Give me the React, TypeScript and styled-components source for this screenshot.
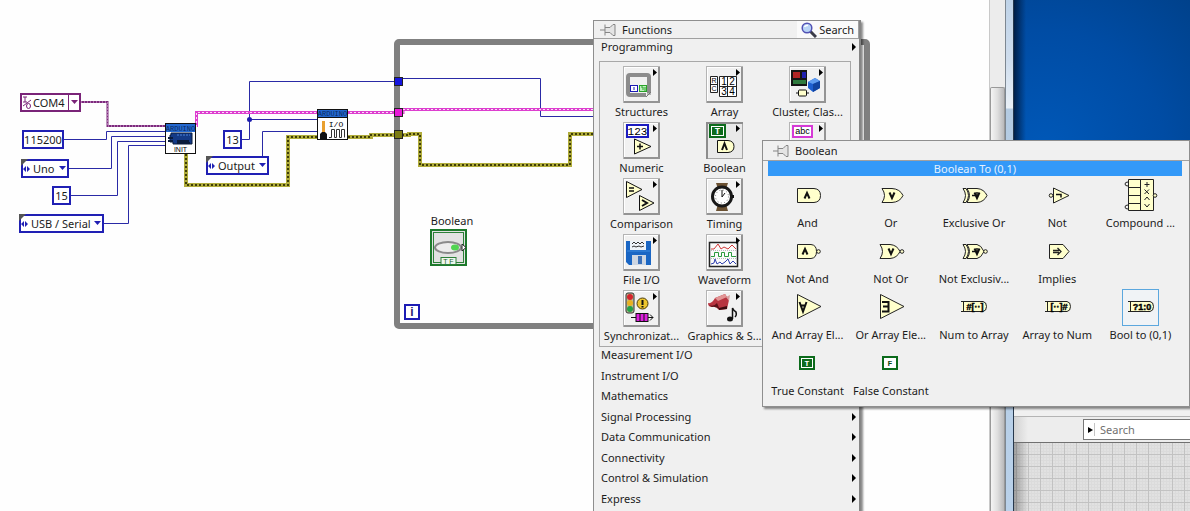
import React from "react";
import styled, { createGlobalStyle, css } from "styled-components";

const GlobalStyle = createGlobalStyle`
  * { box-sizing: border-box; }
  body {
    margin: 0;
    background: #fff;
    overflow: hidden;
    color: #1c1c1c;
    font-family: "Noto Sans", "Open Sans", sans-serif;
    font-size: 11px;
    line-height: 16px;
  }
  button, input, select { font: inherit; color: inherit; }
`;

/* ---------- page frame ---------- */

const Page = styled.div`
  position: relative;
  display: flex;
  min-height: 100vh;
  overflow: hidden;
`;

const Diagram = styled.main`
  position: relative;
  flex: 1;
  min-width: 0;
  background: #fefefe;
`;

const ScrollTrack = styled.div`
  display: flex;
  flex-direction: column;
  width: 16px;
  padding-top: 87px;
  border-left: 1px solid #c9c9c9;
  background: #ececec;
`;

const ScrollThumb = styled.div`
  flex: 1;
  border: 1px solid #999;
  border-bottom: 0;
  border-radius: 2px 2px 0 0;
  background: linear-gradient(90deg, #f4f4f4, #dedede 50%, #b9b9bb);
`;

const WindowEdge = styled.div`
  width: 9px;
  border-left: 1px solid #7d8791;
  border-right: 1px solid #27384c;
  background: linear-gradient(180deg, #bfd3e8 0, #cfdded 60px, #e9f0f7 108px, #b4cbe2 109px, #b9d1ea 100%);
`;

const Side = styled.aside`
  display: flex;
  flex-direction: column;
  width: 176px;
`;

const Desktop = styled.div`
  height: 400px;
  background:
    linear-gradient(90deg, rgba(0, 15, 40, 0.75), transparent 12px),
    radial-gradient(circle at 30px 150px, #0058b8, #004ca4 120px, #004088 220px);
`;

const PanelWindow = styled.section`
  display: flex;
  flex: 1;
  flex-direction: column;
  padding-top: 16px;
  background: #f0f0f0;
`;

const PanelToolbar = styled.div`
  display: flex;
  justify-content: flex-end;
  padding: 2px 0;
  border-top: 1px solid #b4b4b4;
  border-bottom: 1px solid #707070;
  background: linear-gradient(90deg, #d2d2d2, #ededed 14px);
`;

const SearchField = styled.label`
  display: flex;
  align-items: center;
  width: 107px;
  height: 21px;
  padding-left: 4px;
  border: 1px solid #777;
  border-right: 0;
  background: #fff;
`;

const SearchInput = styled.input`
  flex: 1;
  min-width: 0;
  margin-left: 1px;
  padding: 0 0 0 5px;
  border: 0;
  border-left: 1px solid #c4c4c4;
  height: 13px;
  outline: 0;
  background: transparent;
  &::placeholder { color: #707070; opacity: 1; }
`;

const PanelGrid = styled.div`
  flex: 1;
  background:
    linear-gradient(90deg, rgba(60, 60, 60, 0.4), transparent 14px),
    repeating-linear-gradient(90deg, transparent 0 2px, #c2c2c2 2px 3px, transparent 3px 12px),
    repeating-linear-gradient(180deg, transparent 0 11px, #c2c2c2 11px 12px),
    repeating-linear-gradient(90deg, transparent 0 2px, #dbdbdb 2px 3px),
    repeating-linear-gradient(180deg, #e1e1e1 0 2px, #dbdbdb 2px 3px);
`;

/* ---------- diagram nodes ---------- */

const Wires = styled.svg`
  position: absolute;
  inset: 0;
  width: 100%;
  height: 100%;
`;

const LoopFrame = styled.div`
  position: absolute;
  left: 394px;
  top: 39px;
  width: 476px;
  height: 290px;
  border: 6px solid #808080;
  border-radius: 5px;
`;

type Place = { $x: number; $y: number; $w?: number };

const placed = css<Place>`
  position: absolute;
  left: ${(p) => p.$x}px;
  top: ${(p) => p.$y}px;
  ${(p) => p.$w && `width: ${p.$w}px;`}
`;

const NumberBox = styled.input<Place>`
  ${placed}
  height: 19px;
  padding: 0;
  border: 2px solid #2020b4;
  background: #fff;
  outline: 0;
  text-align: center;
`;

const RingBox = styled.div<Place & { $tone?: string }>`
  ${placed}
  height: 19px;
  border: 2px solid ${(p) => p.$tone || "#2020b4"};
  background: #fff;
`;

const RingSelect = styled.select<{ $inset: number }>`
  display: block;
  width: 100%;
  height: 15px;
  padding: 0 0 0 ${(p) => p.$inset}px;
  border: 0;
  appearance: none;
  background: transparent;
  line-height: 15px;
  outline: 0;
`;

const RingMark = styled.svg<{ $side: "left" | "right" }>`
  position: absolute;
  top: -2px;
  ${(p) => p.$side}: -2px;
  pointer-events: none;
`;

const NodeArt = styled.svg<Place>`
  ${placed}
`;

const BooleanNode = styled.button<Place>`
  ${placed}
  display: flex;
  flex-direction: column;
  align-items: center;
  padding: 0;
  border: 0;
  background: none;
`;

/* ---------- palettes ---------- */

const Palette = styled.section`
  position: absolute;
  border: 1px solid #8e8e8e;
  background: #f0f0f0;
  box-shadow: 2px 2px 2px rgba(0, 0, 0, 0.45);
`;

const FunctionsPalette = styled(Palette)`
  left: 593px;
  top: 20px;
  bottom: -8px;
  width: 268px;
  border-right: 2px solid #858585;
`;

const BooleanPalette = styled(Palette)`
  left: 762px;
  right: 0;
  top: 140px;
  padding-bottom: 5px;
`;

const PaletteHeader = styled.header<{ $tall?: boolean }>`
  display: flex;
  align-items: center;
  gap: 6px;
  height: ${(p) => (p.$tall ? 20 : 18)}px;
  padding-left: ${(p) => (p.$tall ? 10 : 6)}px;
  border-bottom: 1px solid #a0a0a0;
`;

const PaletteTitle = styled.h2`
  flex: 1;
  margin: 0;
  font-size: 11px;
  font-weight: 400;
`;

const SearchButton = styled.button`
  display: flex;
  align-items: center;
  gap: 2px;
  height: 17px;
  padding: 0 4px;
  border: 0;
  border-right: 1px solid #a0a0a0;
  background: #fafafa;
`;

const MenuItem = styled.button`
  display: flex;
  align-items: center;
  justify-content: space-between;
  width: 100%;
  padding: 0 2px 0 7px;
  border: 0;
  background: none;
  text-align: left;
`;

const MenuList = styled.nav`
  display: grid;
  grid-auto-rows: 1fr;
  align-items: start;
  height: 164px;
`;

const FunctionGrid = styled.div`
  display: grid;
  grid-template-columns: repeat(3, 83px);
  grid-auto-rows: 56px;
  margin: 6px 8px 0 5px;
  padding-top: 4px;
  border: 1px solid #a8a8a8;
`;

const BooleanGrid = styled.div`
  display: grid;
  grid-template-columns: repeat(5, 1fr);
  grid-auto-rows: 56px;
  padding: 1px 7px 0 3px;
`;

const Selection = styled.div`
  margin: 0 7px 0 5px;
  height: 15px;
  line-height: 15px;
  background: #3399f8;
  color: #e4f1ff;
  text-align: center;
`;

const Cell = styled.button`
  display: flex;
  flex-direction: column;
  align-items: center;
  gap: 1px;
  min-width: 0;
  padding: 0;
  border: 0;
  background: none;
  white-space: nowrap;
`;

const Tile = styled.span<{ $kind: "raised" | "pressed" | "flat" | "selected" }>`
  display: block;
  width: 37px;
  height: 37px;
  svg { display: block; }
  ${(p) =>
    p.$kind === "raised" &&
    css`box-shadow: inset 1px 1px #b4b4b4, inset -2px -2px #949494, inset 2px 2px #fff; background: #f1f1f1;`}
  ${(p) =>
    p.$kind === "pressed" &&
    css`box-shadow: inset 2px 2px #8d8d8d, inset -1px -1px #a6a6a6; background: #e9e9e9;`}
  ${(p) => p.$kind === "selected" && css`box-shadow: inset 0 0 0 1px #5ba7de; background: #f0f3f6;`}
`;

/* ---------- drawings ---------- */

const mono = "Liberation Mono, monospace";
const sans = "Liberation Sans, sans-serif";
const cream = "#ffffcc";

const Arrow = () => (
  <svg width="5" height="8" viewBox="0 0 5 8"><path d="M0 0L4 4L0 8Z" fill="#000" /></svg>
);

const Pin = () => (
  <svg width="16" height="14" viewBox="0 0 16 14" fill="#e4e4e4" stroke="#858585">
    <path d="M0 7H5M5 1.500V12.500M5 4.500H10L13 1.500H15V12.500H13L10 9.500H5" />
  </svg>
);

const Magnifier = () => (
  <svg width="16" height="16" viewBox="0 0 16 16">
    <path d="M9 9L15 15" stroke="#3b3b48" strokeWidth="3" />
    <circle cx="6" cy="6" r="4.800" fill="#b8d4f6" stroke="#5252b4" strokeWidth="1.500" />
    <path d="M3.500 5Q4.500 3 7 3.500" stroke="#fff" strokeWidth="1.500" fill="none" />
  </svg>
);

const tileArt: Record<string, React.ReactNode> = {
  Structures: (
    <>
      <path d="M26 27V11Q26 9 24 9H7Q5 9 5 11V27Q5 29 7 29H23" fill="none" stroke="#8c8c8c" strokeWidth="4" />
      <path d="M23 31L28 26M24 28H28" stroke="#777" />
      <rect x="7.500" y="19.500" width="7" height="6" fill="#fff" stroke="#1a1ab4" />
      <path d="M11 21V24" stroke="#1a1ab4" />
      <rect x="16.500" y="19.500" width="7" height="6" fill="#bff0bf" stroke="#29a329" />
      <path d="M18 21H20V24M22 21V25" stroke="#29a329" fill="none" />
    </>
  ),
  Array: (
    <>
      <path d="M4.500 10.500H11.500V26.500H4.500ZM4.500 18.500H11.500M13.500 10.500H30.500V30.500H13.500ZM13.500 20.500H30.500M21.500 10.500V30.500" fill="#fff" stroke="#222" />
      <g fontFamily={sans} fill="#000" textAnchor="middle">
        <text x="8" y="17" fontSize="7">R</text>
        <text x="8" y="25" fontSize="7">C</text>
        <text x="18" y="19" fontSize="10">1</text>
        <text x="26" y="19" fontSize="10">2</text>
        <text x="18" y="29" fontSize="10">3</text>
        <text x="26" y="29" fontSize="10">4</text>
      </g>
    </>
  ),
  Cluster: (
    <>
      <rect x="2" y="4" width="16" height="16" fill="#151515" />
      <rect x="4" y="6" width="7" height="6" fill="#b02424" />
      <rect x="13" y="6" width="4" height="6" fill="#2020b0" />
      <rect x="4" y="14" width="13" height="4" fill="#2e7a3e" />
      <path d="M19 16L26 12L31 15V22L24 26L19 22Z" fill="#1c5fd0" />
      <path d="M19 16L26 12L31 15L24 18Z" fill="#5f9df0" />
      <path d="M24 18L31 15V22L24 26Z" fill="#1144a0" />
      <path d="M7 27H20" stroke="#111" />
      <rect x="9.500" y="24" width="8" height="6" rx="1" fill={cream} stroke="#111" />
    </>
  ),
  Numeric: (
    <>
      <rect x="4" y="3" width="21" height="12" fill="#fff" stroke="#1c1cc0" strokeWidth="2" />
      <text x="14.500" y="13" fontSize="11" fontFamily={mono} textAnchor="middle" fill="#000">123</text>
      <path d="M11.500 17L28 24.500L11.500 32Z" fill={cream} stroke="#111" />
      <path d="M14 24.500H20M17 21.500V27.500" stroke="#111" strokeWidth="1.500" />
    </>
  ),
  Boolean: (
    <>
      <rect x="4" y="3" width="15" height="12" fill="#fff" stroke="#0c6b1c" strokeWidth="2" />
      <rect x="6" y="5" width="11" height="8" fill="#0c6b1c" />
      <text x="11.500" y="12" fontSize="9" fontWeight="700" fontFamily={mono} textAnchor="middle" fill="#fff">T</text>
      <path d="M11.500 18.500H22Q28 19 28 24.500Q28 30 22 30.500H11.500Z" fill={cream} stroke="#111" />
      <path d="M16 28L18.500 21.500L21 28" fill="none" stroke="#111" strokeWidth="2" />
    </>
  ),
  String: (
    <>
      <rect x="4" y="4" width="19" height="11" fill="#fff" stroke="#d63ad6" strokeWidth="2" />
      <text x="13.500" y="12" fontSize="9" fontFamily={sans} textAnchor="middle" fill="#000">abc</text>
    </>
  ),
  Comparison: (
    <>
      <path d="M3.500 3.500L19 11.500L3.500 19.500Z" fill={cream} stroke="#111" />
      <path d="M6 10H11M6 13H11" stroke="#111" strokeWidth="1.500" />
      <path d="M16.500 17.500L31 25L16.500 32.500Z" fill={cream} stroke="#111" />
      <path d="M19 22L24 25L19 28" fill="none" stroke="#111" strokeWidth="2" />
    </>
  ),
  Timing: (
    <>
      <path d="M10 5H22L20 11H12ZM12 26H20L22 33H10Z" fill="#6b5132" />
      <circle cx="16" cy="18.500" r="9.500" fill="#fff" stroke="#181818" strokeWidth="3" />
      <circle cx="16" cy="18.500" r="6.500" fill="none" stroke="#777" strokeDasharray="1 2.400" />
      <path d="M16 19V12M16 19L19 15" stroke="#111" fill="none" />
      <path d="M27 17V20" stroke="#111" strokeWidth="2" />
    </>
  ),
  File: (
    <>
      <path d="M3 7H28V31H6L3 28Z" fill="#1a66c4" />
      <rect x="7" y="7" width="16" height="9" fill="#eef4fa" />
      <path d="M9 10L11 8L13 10L15 8L17 10L19 8L21 10M9 13L11 12L13 13L16 12L18 13L21 12" fill="none" stroke="#333" />
      <path d="M4 17H27" stroke="#3c8be0" />
      <rect x="9" y="21" width="14" height="10" fill="#cdd6e2" />
      <rect x="15" y="22" width="4" height="8" fill="#3a6fb8" />
    </>
  ),
  Waveform: (
    <>
      <rect x="3.500" y="8.500" width="28" height="24" fill="#fbfbfb" stroke="#222" strokeWidth="1.500" />
      <path d="M5 16.500H30M5 24.500H30" stroke="#bbb" strokeDasharray="1 1" />
      <path d="M5 15H8L12 10L15 15L18 13L22 15L26 11L30 15" fill="none" stroke="#d23a3a" />
      <path d="M5 22.500H8.500V18.500H12.500V22.500H15.500V18.500H18.500V22.500H22.500V18.500H25.500V22.500H30" fill="none" stroke="#2a9a3c" />
      <path d="M5 30L8 29L9 25L11 30L14 28L16 30L19 28L22 25L24 30L27 27L30 30" fill="none" stroke="#2f3fae" />
    </>
  ),
  Sync: (
    <>
      <rect x="3" y="3" width="8" height="20" rx="2" fill="#bdbb94" stroke="#333" />
      <circle cx="7" cy="7" r="3" fill="#d6232b" />
      <circle cx="7" cy="13" r="3" fill="#e8b021" />
      <circle cx="7" cy="19" r="3" fill="#23a047" />
      <circle cx="19.500" cy="13.500" r="5.500" fill="#ecc52e" stroke="#4a3a08" />
      <path d="M19.500 10V15M19.500 16V17.500" stroke="#111" strokeWidth="2" />
      <path d="M8 27.500H30M27 24.500L30 27.500L27 30.500" stroke="#111" fill="none" />
      <rect x="13" y="23.500" width="12" height="8" fill="#dd1fdd" stroke="#111" />
      <path d="M17 23.500V31.500M21 23.500V31.500" stroke="#111" />
    </>
  ),
  Graphics: (
    <>
      <path d="M2 13Q6 14 9 8L19 4L23 10L21 19L13 20Q10 16 6 17Q2 17 2 13Z" fill="#b83440" />
      <path d="M9 8L19 4L21 7L12 11Z" fill="#e29494" />
      <path d="M3 15Q8 17 11 13L14 20Q10 16 6 17Z" fill="#5c1218" />
      <path d="M13 18L21 16L21 19L13 20Z" fill="#3c0a0e" />
      <path d="M20 7L24 5L23 11Z" fill="#d8a0a0" />
      <ellipse cx="24" cy="29" rx="3" ry="2.500" fill="#111" />
      <path d="M26.500 29V18Q28 21 30 22Q31 25 29 27" fill="none" stroke="#111" strokeWidth="1.500" />
    </>
  ),
};

const caret = (x: number) => <path d={`M${x - 2.5} 21.500L${x} 16L${x + 2.5} 21.500`} fill="none" stroke="#111" strokeWidth="2" />;
const vee = (x: number) => <path d={`M${x - 2.5} 15.500L${x} 21L${x + 2.5} 15.500`} fill="none" stroke="#111" strokeWidth="2" />;
const orBody = (l: number, r: number) => (
  <path d={`M${l} 11.500H${l + 10}Q${r - 3} 12 ${r} 18.500Q${r - 3} 25 ${l + 10} 25.500H${l}Q${l + 5} 18.500 ${l} 11.500Z`} fill={cream} stroke="#222" />
);
const bubble = (x: number) => <circle cx={x} cy="18.500" r="1.800" fill={cream} stroke="#222" />;
const xor = (r: number) => (
  <>
    <path d="M8 11.500Q13 18.500 8 25.500H11Q16 18.500 11 11.500Z" fill={cream} stroke="#222" />
    {orBody(12, r)}
    {vee(22)}
    <path d="M17 18.500H20M22 15V20" stroke="#111" strokeWidth="1.500" />
  </>
);
const converter = (text: string) => (
  <>
    <path d="M7 12.500H28Q31.500 13 31.500 17.500Q31.500 22 28 22.500H7" fill={cream} />
    <path d="M6 12.500H28Q31.500 13 31.500 17.500Q31.500 22 28 22.500H6M8.500 12V23" fill="none" stroke="#222" />
    <text x="20" y="21" fontSize="9" fontWeight="700" fontFamily={sans} textAnchor="middle" fill="#000" stroke="#000" strokeWidth="0.400">{text}</text>
  </>
);
const constant = (text: string, on: boolean) => (
  <>
    <rect x="11" y="12" width="14" height="12" fill="#fff" stroke="#0c6b1c" strokeWidth="2" />
    {on && <rect x="13" y="14" width="10" height="8" fill="#0c6b1c" />}
    <text x="18" y="21" fontSize="8" fontWeight="700" fontFamily={mono} textAnchor="middle" fill={on ? "#fff" : "#0c4a14"}>{text}</text>
  </>
);

const gates: { label: string; art: React.ReactNode; selected?: boolean }[] = [
  { label: "And", art: <><path d="M8.500 11.500H25Q31.500 12 31.500 18.500Q31.500 25 25 25.500H8.500Z" fill={cream} stroke="#222" />{caret(18)}</> },
  { label: "Or", art: <>{orBody(10, 31)}{vee(20)}</> },
  { label: "Exclusive Or", art: xor(32) },
  { label: "Not", art: <><path d="M14.500 11L30 18.500L14.500 26Z" fill={cream} stroke="#222" />{bubble(12)}<path d="M17 17.500H22V20.500" fill="none" stroke="#111" strokeWidth="1.500" /></> },
  {
    label: "Compound ...",
    art: (
      <>
        <path d="M6.500 2.500H31.500V33.500H6.500ZM18.500 2.500V33.500M6.500 10.500H18.500M6.500 18.500H18.500M6.500 26.500H18.500" fill={cream} stroke="#222" />
        <path d="M18.500 2.500V33.500" stroke="#222" />
        <path d="M6 5Q3 5 3 7Q3 9 6 9M6 28Q3 28 3 30Q3 32 6 32" fill="none" stroke="#222" />
        {bubble(33)}
        <path d="M22.500 7.500H27.500M25 5V10M22.500 12.500L27 17M27 12.500L22.500 17M22.500 23L25 20L27.500 23M22.500 27L25 30L27.500 27" fill="none" stroke="#222" />
      </>
    ),
  },
  { label: "Not And", art: <><path d="M8.500 11.500H22Q27.500 12 27.500 18.500Q27.500 25 22 25.500H8.500Z" fill={cream} stroke="#222" />{caret(16)}{bubble(29.5)}</> },
  { label: "Not Or", art: <>{orBody(8, 28)}{vee(19)}{bubble(30)}</> },
  { label: "Not Exclusiv...", art: <>{xor(29)}{bubble(30.5)}</> },
  { label: "Implies", art: <><path d="M10.500 11.500H24L30 18.500L24 25.500H10.500Z" fill={cream} stroke="#222" /><path d="M14 17.500H20M14 19.500H20M18.500 15L22 18.500L18.500 22" fill="none" stroke="#222" strokeWidth="1.300" /></> },
  { label: "", art: null },
  { label: "And Array El...", art: <><path d="M8.500 5.500L32 17.500L8.500 29.500Z" fill={cream} stroke="#222" /><path d="M10.500 13L14 22.500L17.500 13M11.500 16.500H16.500" fill="none" stroke="#111" strokeWidth="2" /></> },
  { label: "Or Array Ele...", art: <><path d="M8.500 5.500L32 17.500L8.500 29.500Z" fill={cream} stroke="#222" /><path d="M10 13H16.500V22.500H10M11 17.500H16.500" fill="none" stroke="#111" strokeWidth="2" /></> },
  { label: "Num to Array", art: converter("#[··]") },
  { label: "Array to Num", art: converter("[··]#") },
  { label: "Bool to (0,1)", art: converter("?1:0"), selected: true },
  { label: "True Constant", art: constant("T", true) },
  { label: "False Constant", art: constant("F", false) },
];

const functions: ({ art: string; label: string } | null)[] = [
  { art: "Structures", label: "Structures" },
  { art: "Array", label: "Array" },
  { art: "Cluster", label: "Cluster, Clas..." },
  { art: "Numeric", label: "Numeric" },
  { art: "Boolean", label: "Boolean" },
  { art: "String", label: "" },
  { art: "Comparison", label: "Comparison" },
  { art: "Timing", label: "Timing" },
  null,
  { art: "File", label: "File I/O" },
  { art: "Waveform", label: "Waveform" },
  null,
  { art: "Sync", label: "Synchronizat..." },
  { art: "Graphics", label: "Graphics & S..." },
  null,
];

const categories = [
  "Measurement I/O",
  "Instrument I/O",
  "Mathematics",
  "Signal Processing",
  "Data Communication",
  "Connectivity",
  "Control & Simulation",
  "Express",
];

const Ring = ({ x, y, w, value, name }: { x: number; y: number; w: number; value: string; name: string }) => (
  <RingBox $x={x} $y={y} $w={w}>
    <RingSelect aria-label={name} $inset={10}><option>{value}</option></RingSelect>
    <RingMark $side="left" width="12" height="19" viewBox="0 0 12 19">
      <path d="M0 0H7L0 7Z" fill="#555" />
      <path d="M2 10L5 7V13ZM6 7L9 10L6 13Z" fill="#2020b4" />
    </RingMark>
    <RingMark $side="right" width="12" height="19" viewBox="0 0 12 19"><path d="M2 7H9L5.500 11Z" fill="#2020b4" /></RingMark>
  </RingBox>
);

const pinkPath = "M196.500 127V112.500H400H403V109.500H600";
const olivePaths = "M186 154V185H288V137H318M348 137H371V135H409V134H420V165H570V134H600";
const purplePath = "M81 102H107.500V126H166";

const DiagramWires = () => (
  <Wires fill="none">
    <g stroke="#2a2aa6">
      <path d="M64 139.500H106.500V131.500H166M69 168.500H111.500V136.500H166M71 195.500H117.500V141.500H166M104 223.500H128.500V145.500H166" />
      <path d="M242 139.500H249.500V81.500H398M249.500 119.500H318M262.500 157V131.500H318M403 78.500H540.500V116.500H600" />
    </g>
    <circle cx="249.500" cy="119.500" r="2.500" fill="#1c1cae" />
    <path d={purplePath} stroke="#7c2a7c" strokeWidth="2" />
    <path d={purplePath} stroke="#e3b9e3" strokeDasharray="1 2" />
    <path d={pinkPath} stroke="#dd3fcf" strokeWidth="3" />
    <path d={pinkPath} stroke="#fbe0f8" strokeDasharray="2 2" strokeWidth="1" />
    <path d={olivePaths} stroke="#b0ac3c" strokeWidth="4" />
    <path d={olivePaths} stroke="#3d3d08" strokeDasharray="2 2" strokeWidth="2" />
  </Wires>
);

const Tunnels = () => (
  <Wires>
    <g stroke="#222">
      <rect x="394.500" y="77.500" width="8" height="8" fill="#1414e0" />
      <rect x="394.500" y="108.500" width="8" height="8" fill="#e81ad8" />
      <rect x="394.500" y="130.500" width="8" height="8" fill="#7c7c14" />
    </g>
  </Wires>
);

export default function App() {
  return (
    <Page>
      <GlobalStyle />
      <Diagram>
        <LoopFrame />
        <DiagramWires />
        <Tunnels />

        <RingBox $x={20} $y={93} $w={61} $tone="#7a2478">
          <RingSelect aria-label="VISA resource" $inset={11}><option>COM4</option></RingSelect>
          <RingMark $side="left" width="14" height="19" viewBox="0 0 14 19">
            <path d="M3 4H7M5 4V9M3 9H7M3 13L11 7" stroke="#7a2478" fill="none" />
            <ellipse cx="8.500" cy="13" rx="2" ry="2.500" fill="none" stroke="#7a2478" />
          </RingMark>
          <RingMark $side="right" width="13" height="19" viewBox="0 0 13 19">
            <path d="M0.500 0V19" stroke="#7a2478" />
            <path d="M3 7H10L6.500 11Z" fill="#7a2478" />
          </RingMark>
        </RingBox>
        <NumberBox $x={22} $y={130} $w={42} aria-label="Baud rate" defaultValue="115200" />
        <Ring x={21} y={159} w={48} value="Uno" name="Board type" />
        <NumberBox $x={52} $y={186} $w={19} aria-label="Bytes per packet" defaultValue="15" />
        <Ring x={19} y={214} w={85} value="USB / Serial" name="Connection type" />
        <NumberBox $x={223} $y={130} $w={19} aria-label="Pin" defaultValue="13" />
        <Ring x={206} y={156} w={63} value="Output" name="Pin mode" />

        <NodeArt $x={165} $y={123} width="31" height="31" viewBox="0 0 31 31">
          <rect x="0.500" y="0.500" width="30" height="30" fill="#fff" stroke="#111" />
          <rect x="1" y="1" width="29" height="8" fill="#2468cf" />
          <text x="15.500" y="8" fontSize="7" fontFamily={mono} textAnchor="middle" fill="#0a2860">ARDUINO</text>
          <path d="M6 10H27V21H8V19H5V12H6Z" fill="#143a86" stroke="#0b1c3c" />
          <path d="M3 15H8M3 18H8M12 18H24M12 20H25" stroke="#0b1c3c" strokeWidth="2" />
          <path d="M12 12H25" stroke="#4c83d8" strokeDasharray="2 1" />
          <text x="15.500" y="29" fontSize="7" fontFamily={sans} textAnchor="middle" fill="#000">INIT</text>
        </NodeArt>
        <NodeArt $x={317} $y={109} width="31" height="31" viewBox="0 0 31 31">
          <rect x="0.500" y="0.500" width="30" height="30" fill="#fff" stroke="#111" />
          <rect x="1" y="1" width="29" height="7" fill="#2468cf" />
          <path d="M0 8.500H31" stroke="#111" />
          <text x="15.500" y="7" fontSize="7" fontFamily={mono} textAnchor="middle" fill="#0a2860">ARDUINO</text>
          <path d="M6.500 12V24" stroke="#e9a030" strokeWidth="3" />
          <path d="M3 30V25L5 23H8L10 25V30Z" fill="#111" />
          <text x="19" y="18" fontSize="8" fontFamily={mono} textAnchor="middle" fill="#000">I/O</text>
          <path d="M12 28.500H14.500V20.500H17.500V28.500H19.500V20.500H22.500V28.500H24.500V20.500H27.500V28.500" fill="none" stroke="#333" />
        </NodeArt>

        <BooleanNode $x={430} $y={213} $w={44}>
          Boolean
          <svg width="44" height="37" viewBox="0 0 44 37">
            <rect x="1" y="1" width="35" height="35" fill="#e2e2e2" stroke="#1d7a2c" strokeWidth="2" />
            <rect x="3.500" y="3.500" width="30" height="30" fill="none" stroke="#2c8038" />
            <ellipse cx="18" cy="18.500" rx="13" ry="5.500" fill="#ececec" stroke="#8a8a8a" strokeWidth="2" />
            <ellipse cx="25" cy="18.500" rx="4" ry="3" fill="#52d452" />
            <path d="M32 15L36 18.500L32 22Z" fill="#fff" stroke="#222" />
            <rect x="11" y="28.500" width="15" height="7" fill="#eef6ee" stroke="#2c8038" />
            <text x="15.500" y="35" fontSize="7" fontFamily={sans} textAnchor="middle" fill="#1c6428">T</text>
            <text x="21.500" y="35" fontSize="7" fontFamily={sans} textAnchor="middle" fill="#1c6428">F</text>
          </svg>
        </BooleanNode>
        <NodeArt $x={404} $y={304} width="16" height="16" viewBox="0 0 16 16">
          <rect x="1" y="1" width="14" height="14" fill="#fff" stroke="#1c1cb4" strokeWidth="2" />
          <text x="8" y="12" fontSize="12" fontWeight="700" fontFamily={sans} textAnchor="middle" fill="#2a1c70">i</text>
        </NodeArt>
      </Diagram>

      <ScrollTrack><ScrollThumb /></ScrollTrack>
      <WindowEdge />
      <Side>
        <Desktop />
        <PanelWindow>
          <PanelToolbar>
            <SearchField>
              <svg width="5" height="6" viewBox="0 0 5 6"><path d="M0 0L5 3L0 6Z" /></svg>
              <SearchInput placeholder="Search" aria-label="Search" />
            </SearchField>
          </PanelToolbar>
          <PanelGrid />
        </PanelWindow>
      </Side>

      <FunctionsPalette>
        <PaletteHeader>
          <Pin />
          <PaletteTitle>Functions</PaletteTitle>
          <SearchButton><Magnifier />Search</SearchButton>
        </PaletteHeader>
        <MenuItem>Programming<Arrow /></MenuItem>
        <FunctionGrid>
          {functions.map((f, i) =>
            f ? (
              <Cell key={i} aria-label={f.label || f.art}>
                <Tile $kind={f.art === "Boolean" ? "pressed" : "raised"}>
                  <svg width="37" height="37" viewBox="0 0 37 37">
                    {tileArt[f.art]}
                    <path d="M30 3L34 6.500L30 10Z" fill="#000" />
                  </svg>
                </Tile>
                {f.label}
              </Cell>
            ) : (
              <span key={i} />
            )
          )}
        </FunctionGrid>
        <MenuList>
          {categories.map((c) => (
            <MenuItem key={c}>{c}<Arrow /></MenuItem>
          ))}
        </MenuList>
      </FunctionsPalette>

      <BooleanPalette>
        <PaletteHeader $tall>
          <Pin />
          <PaletteTitle>Boolean</PaletteTitle>
        </PaletteHeader>
        <Selection>Boolean To (0,1)</Selection>
        <BooleanGrid>
          {gates.map((g, i) =>
            g.art ? (
              <Cell key={i}>
                <Tile $kind={g.selected ? "selected" : "flat"}>
                  <svg width="37" height="37" viewBox="0 0 37 37">{g.art}</svg>
                </Tile>
                {g.label}
              </Cell>
            ) : (
              <span key={i} />
            )
          )}
        </BooleanGrid>
      </BooleanPalette>
    </Page>
  );
}
